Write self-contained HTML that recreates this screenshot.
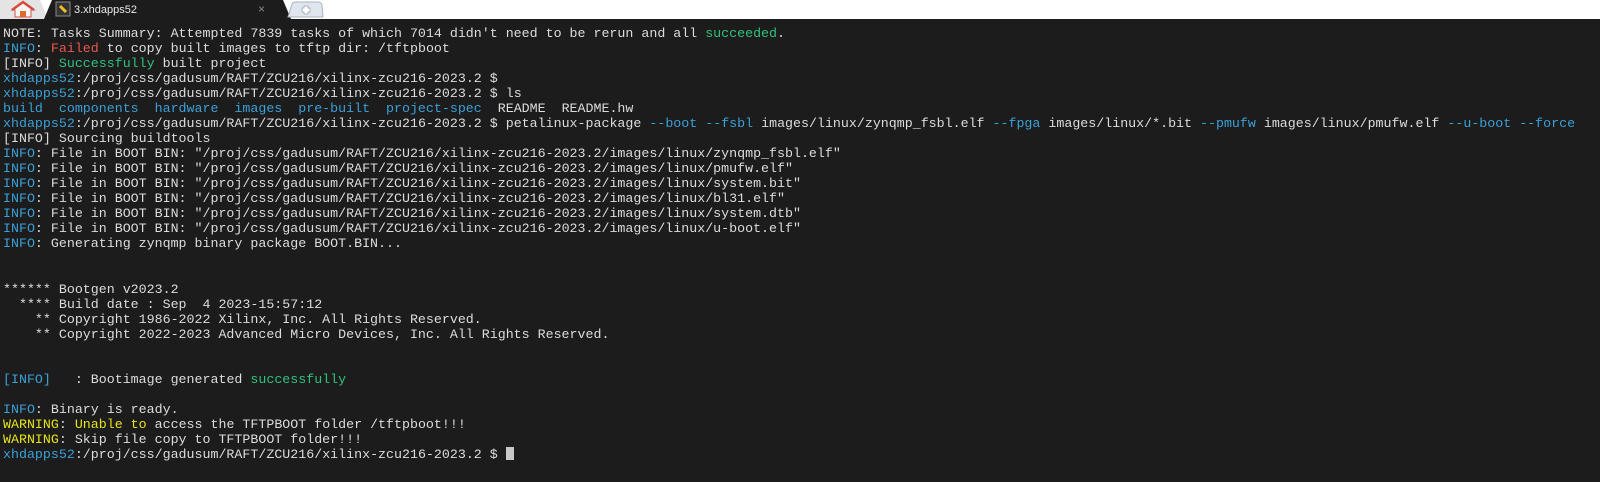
<!DOCTYPE html>
<html><head><meta charset="utf-8"><style>
html,body{margin:0;padding:0;width:1600px;height:482px;overflow:hidden;background:#1c1c1c;}
#bar{position:absolute;left:0;top:0;width:1600px;height:19px;background:#fff;}
#term{position:absolute;left:3px;top:26px;font-family:"Liberation Mono",monospace;font-size:13.3px;line-height:15.03px;color:#dcdcdc;white-space:pre;}
.b{color:#3aa0d8}.g{color:#2ec27e}.r{color:#e8584e}.y{color:#e6e21a}
.cur{display:inline-block;width:8px;height:13px;background:#c8c8c8;vertical-align:-2px}
</style></head><body>
<div id="bar">
<svg width="340" height="19" style="position:absolute;left:0;top:0">
<path d="M0 0 H40 L48 19 H0 Z" fill="#e4e4e4"/>
<path d="M12 10 L23 2 L34 10 H31 V17 H15 V10 Z" fill="#f4f4f4" stroke="#c55" stroke-width="1"/>
<path d="M12 10 L23 2 L34 10" fill="none" stroke="#d84a3a" stroke-width="2.5"/>
<rect x="20" y="11" width="6" height="6" fill="#e06a2a"/>
<path d="M44 19 L52 0 H283 L291 19 Z" fill="#1c1c1c"/>
<rect x="56" y="2" width="14" height="14" fill="#333" stroke="#888"/>
<path d="M60 6 L66 12" stroke="#f0c020" stroke-width="3"/>
<text x="74" y="13" font-family="Liberation Sans,sans-serif" font-size="11" fill="#e8e8e8">3.xhdapps52</text>
<text x="258" y="13" font-family="Liberation Sans,sans-serif" font-size="12" fill="#888">×</text>
<path d="M288 17 L292 4 Q293 2 296 2 H318 Q321 2 322 5 L323 17 Z" fill="#dfe6ee" stroke="#a9b3be"/>
<path d="M304 6 H308 V8 H310 V12 H308 V14 H304 V12 H302 V8 H304 Z" fill="#fff" stroke="#9aa4ae" stroke-width="0.8"/>
</svg>
</div>
<div id="term">NOTE: Tasks Summary: Attempted 7839 tasks of which 7014 didn't need to be rerun and all <span class="g">succeeded</span>.
<span class="b">INFO</span>: <span class="r">Failed</span> to copy built images to tftp dir: /tftpboot
[INFO] <span class="g">Successfully</span> built project
<span class="b">xhdapps52</span>:/proj/css/gadusum/RAFT/ZCU216/xilinx-zcu216-2023.2 $
<span class="b">xhdapps52</span>:/proj/css/gadusum/RAFT/ZCU216/xilinx-zcu216-2023.2 $ ls
<span class="b">build  components  hardware  images  pre-built  project-spec</span>  README  README.hw
<span class="b">xhdapps52</span>:/proj/css/gadusum/RAFT/ZCU216/xilinx-zcu216-2023.2 $ petalinux-package <span class="b">--boot</span> <span class="b">--fsbl</span> images/linux/zynqmp_fsbl.elf <span class="b">--fpga</span> images/linux/*.bit <span class="b">--pmufw</span> images/linux/pmufw.elf <span class="b">--u-boot</span> <span class="b">--force</span>
[INFO] Sourcing buildtools
<span class="b">INFO</span>: File in BOOT BIN: "/proj/css/gadusum/RAFT/ZCU216/xilinx-zcu216-2023.2/images/linux/zynqmp_fsbl.elf"
<span class="b">INFO</span>: File in BOOT BIN: "/proj/css/gadusum/RAFT/ZCU216/xilinx-zcu216-2023.2/images/linux/pmufw.elf"
<span class="b">INFO</span>: File in BOOT BIN: "/proj/css/gadusum/RAFT/ZCU216/xilinx-zcu216-2023.2/images/linux/system.bit"
<span class="b">INFO</span>: File in BOOT BIN: "/proj/css/gadusum/RAFT/ZCU216/xilinx-zcu216-2023.2/images/linux/bl31.elf"
<span class="b">INFO</span>: File in BOOT BIN: "/proj/css/gadusum/RAFT/ZCU216/xilinx-zcu216-2023.2/images/linux/system.dtb"
<span class="b">INFO</span>: File in BOOT BIN: "/proj/css/gadusum/RAFT/ZCU216/xilinx-zcu216-2023.2/images/linux/u-boot.elf"
<span class="b">INFO</span>: Generating zynqmp binary package BOOT.BIN...


****** Bootgen v2023.2
  **** Build date : Sep  4 2023-15:57:12
    ** Copyright 1986-2022 Xilinx, Inc. All Rights Reserved.
    ** Copyright 2022-2023 Advanced Micro Devices, Inc. All Rights Reserved.


<span class="b">[INFO]</span>   : Bootimage generated <span class="g">successfully</span>

<span class="b">INFO</span>: Binary is ready.
<span class="y">WARNING</span>: <span class="y">Unable to</span> access the TFTPBOOT folder /tftpboot!!!
<span class="y">WARNING</span>: Skip file copy to TFTPBOOT folder!!!
<span class="b">xhdapps52</span>:/proj/css/gadusum/RAFT/ZCU216/xilinx-zcu216-2023.2 $ <span class="cur"></span></div>
</body></html>
